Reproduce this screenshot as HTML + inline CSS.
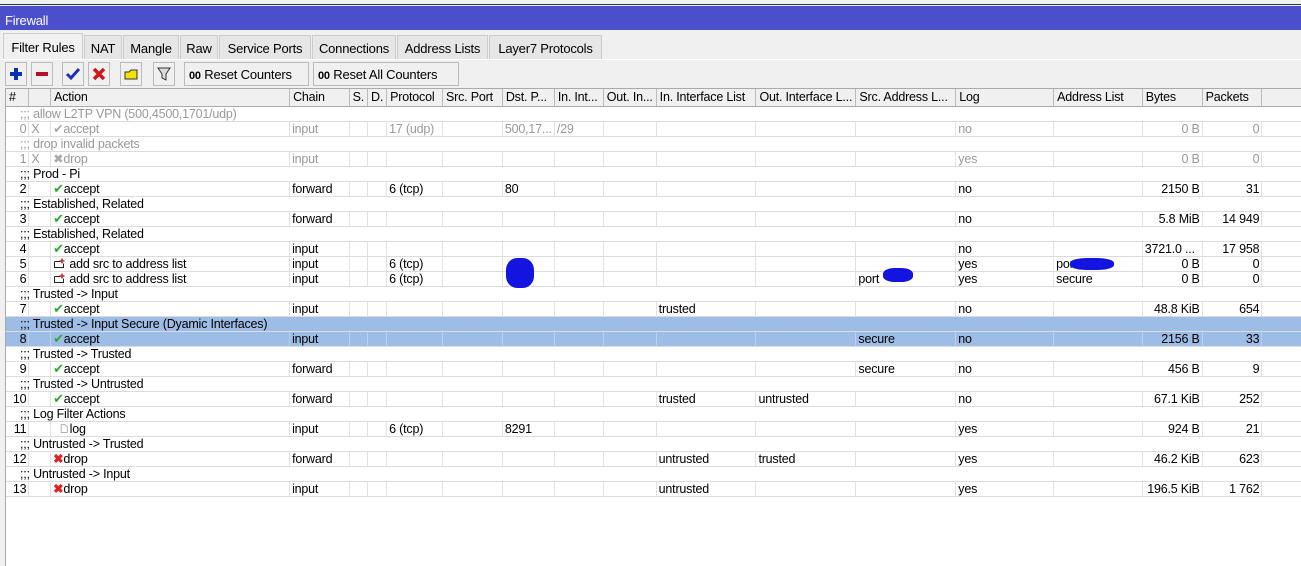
<!DOCTYPE html>
<html><head><meta charset="utf-8"><style>
*{margin:0;padding:0;box-sizing:border-box}
body{width:1301px;height:566px;overflow:hidden;background:#f0f0f0;font-family:"Liberation Sans",sans-serif;font-size:12.5px;color:#000;position:relative;letter-spacing:-0.2px}
.top{position:absolute;left:0;top:0;width:1301px;height:5px;background:#f0f0f0;border-bottom:1px solid #333}
.title{position:absolute;left:0;top:6px;width:1301px;height:24px;background:#4b4fcc;color:#fff;font-size:13px;padding:7px 0 0 5px}
.tab{position:absolute;top:35px;height:24px;border:1px solid #ccc;border-bottom:none;background:#e6e6e6;padding:5px 0 0 0;font-size:13px;text-align:center}
.tab.on{background:#f0f0f0;top:33px;height:27px;padding-top:6px}
.tl{position:absolute;left:0;top:59px;width:1301px;border-top:1px solid #fff}
.btn{position:absolute;top:62px;height:24px;border:1px solid #bbb;background:#f0f0f0;font-size:13px}
.btn.t{padding:4px 0 0 4px}
.list{position:absolute;left:5px;top:88px;width:1296px;height:478px;background:#fff;border-left:1px solid #aaa;border-top:1px solid #aaa}
table{border-collapse:collapse;table-layout:fixed;position:absolute;left:0;top:0}
td,th{height:15px;line-height:14px;padding:0 2px;white-space:nowrap;overflow:hidden;border-bottom:1px solid #dcdcdc;font-weight:normal;text-align:left;vertical-align:bottom}
th{height:17px;background:#f0f0f0;border-right:1px solid #bbb;border-bottom:1px solid #aaa;padding:0 3px;vertical-align:middle}
tr.r td{border-right:1px solid #e2e2e2}
tr.r td:last-child{border-right:none}
.g td{color:#999}
.sel td{background:#9dbde6}
tr.sel.r td{border-right-color:#b8cfee}
.n{text-align:right}
.c td{padding-left:14px}
.ck{color:#2eaa2e;font-size:13px}
.x{color:#d22;font-weight:bold}
.ic{display:inline-block;width:13px;height:11px;vertical-align:-1px}
.blob{position:absolute;background:#1414e0;border-radius:40%}
</style></head><body>
<div class="top"></div>
<div class="title">Firewall</div>
<div class="tab on" style="left:3px;width:80px">Filter Rules</div>
<div class="tab" style="left:84px;width:38px">NAT</div>
<div class="tab" style="left:123px;width:56px">Mangle</div>
<div class="tab" style="left:180px;width:38px">Raw</div>
<div class="tab" style="left:219px;width:92px">Service Ports</div>
<div class="tab" style="left:312px;width:84px">Connections</div>
<div class="tab" style="left:397px;width:91px">Address Lists</div>
<div class="tab" style="left:489px;width:113px">Layer7 Protocols</div>
<div class="tl"></div>
<div class="btn" style="left:5px;width:22px"><svg width="20" height="22"><path d="M10 5v12M4 11h12" stroke="#0a2fb4" stroke-width="4"/></svg></div>
<div class="btn" style="left:31px;width:22px"><svg width="20" height="22"><path d="M4 11h12" stroke="#b4102a" stroke-width="4"/></svg></div>
<div class="btn" style="left:62px;width:22px"><svg width="20" height="22"><path d="M4 11l4 4 8-9" stroke="#1a2fc0" stroke-width="3" fill="none"/></svg></div>
<div class="btn" style="left:88px;width:22px"><svg width="20" height="22"><path d="M5 6l10 10M15 6L5 16" stroke="#d01818" stroke-width="3.5"/></svg></div>
<div class="btn" style="left:120px;width:22px"><svg width="20" height="22"><path d="M4 9h4l2-2h6v9H4z" fill="#f4e300" stroke="#333"/></svg></div>
<div class="btn" style="left:153px;width:22px"><svg width="20" height="22"><path d="M4 5h12l-4 6v6l-4-2v-4z" fill="#ddd" stroke="#333"/></svg></div>
<div class="btn t" style="left:184px;width:125px"><b style="font-size:11px">00</b> Reset Counters</div>
<div class="btn t" style="left:313px;width:146px"><b style="font-size:11px">00</b> Reset All Counters</div>
<div class="list">
<table>
<colgroup><col style="width:23px"><col style="width:22px"><col style="width:242px"><col style="width:60px"><col style="width:16px"><col style="width:18px"><col style="width:56px"><col style="width:60px"><col style="width:52px"><col style="width:49px"><col style="width:47px"><col style="width:100px"><col style="width:100px"><col style="width:100px"><col style="width:100px"><col style="width:89px"><col style="width:60px"><col style="width:60px"><col style="width:40px"></colgroup>
<tr><th>#</th><th></th><th>Action</th><th>Chain</th><th>S.</th><th>D.</th><th>Protocol</th><th>Src. Port</th><th>Dst. P...</th><th>In. Int...</th><th>Out. In...</th><th>In. Interface List</th><th>Out. Interface L...</th><th>Src. Address L...</th><th>Log</th><th>Address List</th><th>Bytes</th><th>Packets</th><th style="border:none;border-bottom:1px solid #aaa"></th></tr>
<tr class="c g"><td colspan="19">;;; allow L2TP VPN (500,4500,1701/udp)</td></tr>
<tr class="r g"><td class="n">0</td><td>X</td><td><span style="color:#aaa">✔</span>accept</td><td>input</td><td></td><td></td><td>17 (udp)</td><td></td><td>500,17...</td><td>/29</td><td></td><td></td><td></td><td></td><td>no</td><td></td><td class="n">0 B</td><td class="n">0</td><td></td></tr>
<tr class="c g"><td colspan="19">;;; drop invalid packets</td></tr>
<tr class="r g"><td class="n">1</td><td>X</td><td><span style="color:#aaa">✖</span>drop</td><td>input</td><td></td><td></td><td></td><td></td><td></td><td></td><td></td><td></td><td></td><td></td><td>yes</td><td></td><td class="n">0 B</td><td class="n">0</td><td></td></tr>
<tr class="c"><td colspan="19">;;; Prod - Pi</td></tr>
<tr class="r"><td class="n">2</td><td></td><td><span class="ck">✔</span>accept</td><td>forward</td><td></td><td></td><td>6 (tcp)</td><td></td><td>80</td><td></td><td></td><td></td><td></td><td></td><td>no</td><td></td><td class="n">2150 B</td><td class="n">31</td><td></td></tr>
<tr class="c"><td colspan="19">;;; Established, Related</td></tr>
<tr class="r"><td class="n">3</td><td></td><td><span class="ck">✔</span>accept</td><td>forward</td><td></td><td></td><td></td><td></td><td></td><td></td><td></td><td></td><td></td><td></td><td>no</td><td></td><td class="n">5.8 MiB</td><td class="n">14 949</td><td></td></tr>
<tr class="c"><td colspan="19">;;; Established, Related</td></tr>
<tr class="r"><td class="n">4</td><td></td><td><span class="ck">✔</span>accept</td><td>input</td><td></td><td></td><td></td><td></td><td></td><td></td><td></td><td></td><td></td><td></td><td>no</td><td></td><td>3721.0 ...</td><td class="n">17 958</td><td></td></tr>
<tr class="r"><td class="n">5</td><td></td><td><svg class="ic" viewBox="0 0 13 11"><path d="M1.5 3.5h6M1.5 3.5v6h9v-4" stroke="#222" fill="none"/><path d="M9 0.5v5M6.5 3h5" stroke="#c22" stroke-width="1.5"/></svg> add src to address list</td><td>input</td><td></td><td></td><td>6 (tcp)</td><td></td><td></td><td></td><td></td><td></td><td></td><td></td><td>yes</td><td>port</td><td class="n">0 B</td><td class="n">0</td><td></td></tr>
<tr class="r"><td class="n">6</td><td></td><td><svg class="ic" viewBox="0 0 13 11"><path d="M1.5 3.5h6M1.5 3.5v6h9v-4" stroke="#222" fill="none"/><path d="M9 0.5v5M6.5 3h5" stroke="#c22" stroke-width="1.5"/></svg> add src to address list</td><td>input</td><td></td><td></td><td>6 (tcp)</td><td></td><td></td><td></td><td></td><td></td><td></td><td>port</td><td>yes</td><td>secure</td><td class="n">0 B</td><td class="n">0</td><td></td></tr>
<tr class="c"><td colspan="19">;;; Trusted -&gt; Input</td></tr>
<tr class="r"><td class="n">7</td><td></td><td><span class="ck">✔</span>accept</td><td>input</td><td></td><td></td><td></td><td></td><td></td><td></td><td></td><td>trusted</td><td></td><td></td><td>no</td><td></td><td class="n">48.8 KiB</td><td class="n">654</td><td></td></tr>
<tr class="c sel"><td colspan="19">;;; Trusted -&gt; Input Secure (Dyamic Interfaces)</td></tr>
<tr class="r sel"><td class="n">8</td><td></td><td><span class="ck">✔</span>accept</td><td>input</td><td></td><td></td><td></td><td></td><td></td><td></td><td></td><td></td><td></td><td>secure</td><td>no</td><td></td><td class="n">2156 B</td><td class="n">33</td><td></td></tr>
<tr class="c"><td colspan="19">;;; Trusted -&gt; Trusted</td></tr>
<tr class="r"><td class="n">9</td><td></td><td><span class="ck">✔</span>accept</td><td>forward</td><td></td><td></td><td></td><td></td><td></td><td></td><td></td><td></td><td></td><td>secure</td><td>no</td><td></td><td class="n">456 B</td><td class="n">9</td><td></td></tr>
<tr class="c"><td colspan="19">;;; Trusted -&gt; Untrusted</td></tr>
<tr class="r"><td class="n">10</td><td></td><td><span class="ck">✔</span>accept</td><td>forward</td><td></td><td></td><td></td><td></td><td></td><td></td><td></td><td>trusted</td><td>untrusted</td><td></td><td>no</td><td></td><td class="n">67.1 KiB</td><td class="n">252</td><td></td></tr>
<tr class="c"><td colspan="19">;;; Log Filter Actions</td></tr>
<tr class="r"><td class="n">11</td><td></td><td>&nbsp;&nbsp;<svg class="ic" viewBox="0 0 13 11" style="width:10px"><path d="M1.5 0.5h5l3 3v7h-8z" stroke="#999" fill="#fff"/></svg>log</td><td>input</td><td></td><td></td><td>6 (tcp)</td><td></td><td>8291</td><td></td><td></td><td></td><td></td><td></td><td>yes</td><td></td><td class="n">924 B</td><td class="n">21</td><td></td></tr>
<tr class="c"><td colspan="19">;;; Untrusted -&gt; Trusted</td></tr>
<tr class="r"><td class="n">12</td><td></td><td><span class="x">✖</span>drop</td><td>forward</td><td></td><td></td><td></td><td></td><td></td><td></td><td></td><td>untrusted</td><td>trusted</td><td></td><td>yes</td><td></td><td class="n">46.2 KiB</td><td class="n">623</td><td></td></tr>
<tr class="c"><td colspan="19">;;; Untrusted -&gt; Input</td></tr>
<tr class="r"><td class="n">13</td><td></td><td><span class="x">✖</span>drop</td><td>input</td><td></td><td></td><td></td><td></td><td></td><td></td><td></td><td>untrusted</td><td></td><td></td><td>yes</td><td></td><td class="n">196.5 KiB</td><td class="n">1 762</td><td></td></tr>
</table>
</div>
<div class="blob" style="left:506px;top:258px;width:28px;height:30px"></div>
<div class="blob" style="left:1070px;top:258px;width:44px;height:12px"></div>
<div class="blob" style="left:883px;top:268px;width:30px;height:14px"></div>
</body></html>
